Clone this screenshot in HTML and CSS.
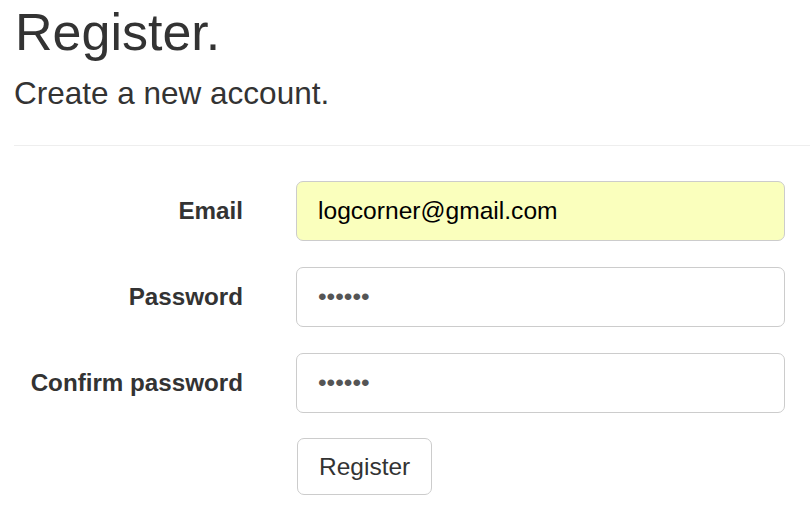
FILE: index.html
```html
<!DOCTYPE html>
<html lang="en">
<head>
<meta charset="utf-8">
<title>Register</title>
<link rel="stylesheet" href="styles.css">
</head>
<body>
<div class="page">
  <h2 class="title">Register.</h2>
  <h4 class="subtitle">Create a new account.</h4>
  <hr class="divider">
  <form class="form">
    <label class="label" for="email">Email</label>
    <input class="input input-autofill" id="email" type="email" value="logcorner@gmail.com">
    <label class="label" for="pw">Password</label>
    <input class="input" id="pw" type="password" value="123456">
    <label class="label" for="cpw">Confirm password</label>
    <input class="input" id="cpw" type="password" value="123456">
    <span class="spacer"></span>
    <div class="actions"><button class="btn" type="button">Register</button></div>
  </form>
</div>
</body>
</html>
```
FILE: styles.css
```css
html, body {
  margin: 0;
  padding: 0;
  background: #fff;
}
body {
  font-family: "Liberation Sans", Arial, sans-serif;
  color: #333;
}
.page {
  padding-left: 14px;
}
.title {
  margin: 2px 0 0 1px;
  font-size: 52px;
  line-height: 60px;
  font-weight: normal;
}
.subtitle {
  margin: 13px 0 0 0;
  font-size: 31.5px;
  line-height: 36px;
  font-weight: normal;
}
.divider {
  margin: 34px 0 0 0;
  height: 0;
  border: 0;
  border-top: 1px solid #eee;
}
.form {
  margin-top: 35px;
  display: grid;
  grid-template-columns: 229px 489px;
  column-gap: 53px;
  row-gap: 26px;
  align-items: center;
}
.label {
  text-align: right;
  font-weight: bold;
  font-size: 24.2px;
}
.input {
  box-sizing: border-box;
  height: 60px;
  width: 100%;
  margin: 0;
  padding: 0 21px;
  border: 1px solid #ccc;
  border-radius: 7px;
  font-family: "Liberation Sans", Arial, sans-serif;
  font-size: 24.6px;
  color: #555;
  background: #fff;
  outline: none;
}
.input-autofill {
  background: #faffbd;
  color: #000;
}
.actions {
  display: flex;
  margin-top: -1px;
}
.btn {
  box-sizing: border-box;
  height: 57px;
  padding: 0 21px;
  margin-left: 1px;
  border: 1px solid #ccc;
  border-radius: 7px;
  background: #fff;
  color: #333;
  font-family: "Liberation Sans", Arial, sans-serif;
  font-size: 24.5px;
}
```
